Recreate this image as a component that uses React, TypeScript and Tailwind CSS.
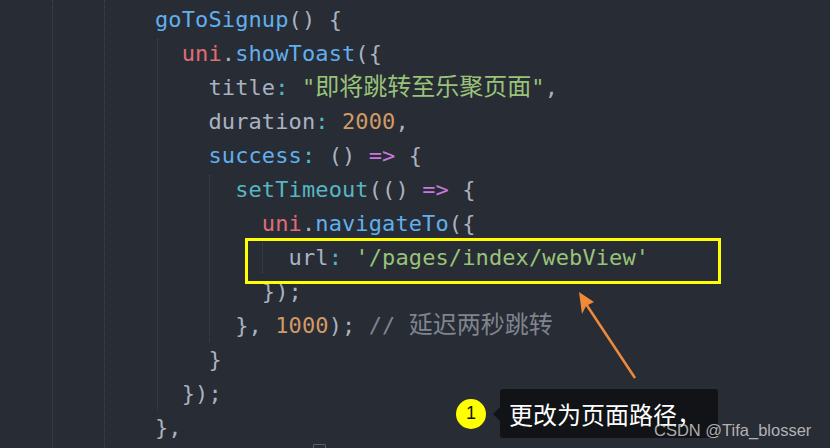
type Tok = [string, string];

const C = {
  p: 'text-[#abb2bf]',
  b: 'text-[#61afef]',
  r: 'text-[#e06c75]',
  g: 'text-[#98c379]',
  o: 'text-[#d19a66]',
  c: 'text-[#56b6c2]',
  v: 'text-[#c678dd]',
  k: 'text-[#a9b2c3]',
  m: 'text-[#7f848e]',
};

const lines: { indent: number; toks: Tok[] }[] = [
  { indent: 0, toks: [['b', 'goToSignup'], ['p', '() {']] },
  { indent: 1, toks: [['r', 'uni'], ['p', '.'], ['b', 'showToast'], ['p', '({']] },
  { indent: 2, toks: [['k', 'title'], ['c', ': '], ['g', '"'], ['gz', '即将跳转至乐聚页面'], ['g', '"'], ['p', ',']] },
  { indent: 2, toks: [['k', 'duration'], ['c', ': '], ['o', '2000'], ['p', ',']] },
  { indent: 2, toks: [['b', 'success'], ['c', ': '], ['p', '() '], ['v', '=>'], ['p', ' {']] },
  { indent: 3, toks: [['c', 'setTimeout'], ['p', '(() '], ['v', '=>'], ['p', ' {']] },
  { indent: 4, toks: [['r', 'uni'], ['p', '.'], ['b', 'navigateTo'], ['p', '({']] },
  { indent: 5, toks: [['k', 'url'], ['c', ': '], ['g', "'/pages/index/webView'"]] },
  { indent: 4, toks: [['p', '});']] },
  { indent: 3, toks: [['p', '}, '], ['o', '1000'], ['p', '); '], ['m', '// '], ['mz', '延迟两秒跳转']] },
  { indent: 2, toks: [['p', '}']] },
  { indent: 1, toks: [['p', '});']] },
  { indent: 0, toks: [['p', '},']] },
];

function Guide({ x, top, bottom }: { x: number; top: number; bottom: number }) {
  return (
    <div
      className="absolute w-0 border-l border-dotted border-[#40454f]"
      style={{ left: x, top, height: bottom - top }}
    />
  );
}

export default function App() {
  return (
    <div className="relative w-[830px] h-[448px] overflow-hidden bg-[#282c34]">
      {/* indent guides */}
      <Guide x={52} top={0} bottom={448} />
      <Guide x={104} top={0} bottom={448} />
      <Guide x={157} top={39} bottom={410} />
      <Guide x={209} top={175} bottom={342} />
      <Guide x={262} top={243} bottom={273} />

      {/* code */}
      <div className="pt-[3px] pl-[155px] font-['DejaVu_Sans_Mono',monospace] text-[22px] tracking-[0.11px]">
        {lines.map((l, i) => (
          <div key={i} className="h-[34px] leading-[34px] whitespace-pre">
            {'  '.repeat(l.indent)}
            {l.toks.map(([k, t], j) =>
              k.endsWith('z') ? (
                <span
                  key={j}
                  className={`${C[k[0] as keyof typeof C]} font-['Noto_Sans_CJK_SC',sans-serif] text-[24px] leading-none tracking-normal`}
                >
                  {t}
                </span>
              ) : (
                <span key={j} className={C[k as keyof typeof C]}>
                  {t}
                </span>
              )
            )}
          </div>
        ))}
      </div>

      {/* highlight box */}
      <div className="absolute left-[245px] top-[238px] w-[476px] h-[46px] border-[3px] border-[#ffff00]" />

      {/* arrow */}
      <svg className="absolute inset-0" width="830" height="448" viewBox="0 0 830 448">
        <line x1="635" y1="378" x2="586" y2="304" stroke="#f08a3a" strokeWidth="2.5" />
        <path d="M579 292 L594 302 L586 306 L582 314 Z" fill="#f08a3a" />
      </svg>

      {/* callout */}
      <div className="absolute left-[456px] top-[389px] flex items-center">
        <div className="w-[30px] h-[30px] rounded-full bg-[#ffff00] flex items-center justify-center font-['Liberation_Sans',sans-serif] text-[18px] text-[#111]">
          1
        </div>
        <div className="ml-[7px] w-0 h-0 border-y-[7px] border-y-transparent border-r-[7px] border-r-[#111317]" />
        <div className="w-[218px] h-[49px] rounded-[3px] bg-[#111317] pl-[9px] flex items-center font-['Noto_Sans_CJK_SC',sans-serif] text-[24px] text-white">
          更改为页面路径，
        </div>
      </div>

      {/* watermark */}
      <div className="absolute left-[654px] top-[420px] font-['Liberation_Sans',sans-serif] text-[16.5px] leading-[20px] text-[#d8d8d8]/80">
        CSDN @Tifa_blosser
      </div>

      {/* scrollbar marker */}
      <div className="absolute left-[313px] top-[444px] w-[13px] h-[6px] border border-[#5a606b] rounded-[1px]" />
    </div>
  );
}
